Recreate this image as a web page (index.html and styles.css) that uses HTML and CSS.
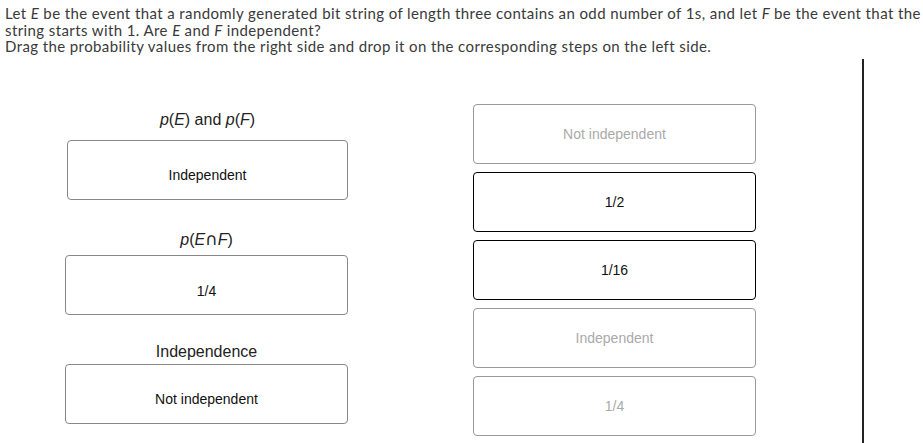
FILE: index.html
```html
<!DOCTYPE html>
<html lang="en">
<head>
  <meta charset="UTF-8" />
  <title>Probability Drag and Drop</title>
  <link rel="stylesheet" href="styles.css">
</head>
<body>
<div class="question">
  Let <i>E</i>be the event that a randomly generated bit string of length three contains an odd number of 1s, and let <i>F</i>be the event that the string starts with 1. Are <i>E</i>and <i>F</i>independent?<br>
  Drag the probability values from the right side and drop it on the corresponding steps on the left side.
</div>

<div class="board">
  <div class="steps">
    <div class="step">
      <div class="step-label"><i>p</i>(<i>E</i>) and <i>p</i>(<i>F</i>)</div>
      <div class="slot">Independent</div>
    </div>
    <div class="step">
      <div class="step-label"><i>p</i>(<i>E</i><span class="cap">∩</span><i>F</i>)</div>
      <div class="slot">1/4</div>
    </div>
    <div class="step">
      <div class="step-label">Independence</div>
      <div class="slot">Not independent</div>
    </div>
  </div>

  <div class="choices">
    <div class="choice used">Not independent</div>
    <div class="choice">1/2</div>
    <div class="choice">1/16</div>
    <div class="choice used">Independent</div>
    <div class="choice used">1/4</div>
  </div>

  <div class="divider"></div>
</div>
</body>
</html>
```

FILE: styles.css
```css
body {
  margin: 0;
  padding: 0;
  background: #fff;
  color: #333;
  font-family: Lato, sans-serif;
}

.question {
  height: 48px;
  padding: 5px 0 0 5px;
  font-size: 15px;
  line-height: 16.5px;
  letter-spacing: 0.4px;
  color: #3a3a3a;
}

.question i {
  display: inline-block;
  height: 16px;
  line-height: 16px;
  margin-right: 4px;
}

.board {
  display: flex;
  align-items: flex-start;
  margin-top: 6px;
  height: 400px;
}

.steps {
  width: 283px;
  margin-left: 65px;
  padding-top: 52px;
  font-family: "Liberation Sans", Arial, sans-serif;
}

.step-label {
  font-size: 16px;
  color: #222;
  text-align: center;
  height: 19px;
}

.step-label .cap {
  font-family: "DejaVu Sans", sans-serif;
  font-size: 17px;
  line-height: 16px;
}

.step:nth-child(1) .step-label { padding-left: 2px; }

.slot {
  border: 1px solid #888;
  border-radius: 4px;
  text-align: center;
  font-size: 14px;
  color: #111;
  line-height: 16px;
  display: flex;
  align-items: center;
  justify-content: center;
}

.step:nth-child(1) .slot {
  margin: 10px 0 0 2px;
  padding-top: 9px;
  height: 49px;
}

.step:nth-child(2) {
  margin-top: 31px;
}

.step:nth-child(2) .slot {
  margin-top: 5px;
  padding-top: 12px;
  height: 46px;
}

.step:nth-child(3) {
  margin-top: 28px;
}

.step:nth-child(3) .slot {
  margin-top: 2px;
  padding-top: 10px;
  height: 48px;
}

.choices {
  width: 283px;
  margin-left: 125px;
  padding-top: 45px;
  display: flex;
  flex-direction: column;
  gap: 8px;
  font-family: "Liberation Sans", Arial, sans-serif;
}

.choice {
  height: 58px;
  border: 1px solid #000;
  border-radius: 4px;
  display: flex;
  align-items: center;
  justify-content: center;
  font-size: 14px;
  color: #111;
}

.choice.used {
  border-color: #999;
  color: #aaa;
}

.divider {
  width: 2px;
  height: 400px;
  margin-left: 106px;
  background: #222;
}
```
